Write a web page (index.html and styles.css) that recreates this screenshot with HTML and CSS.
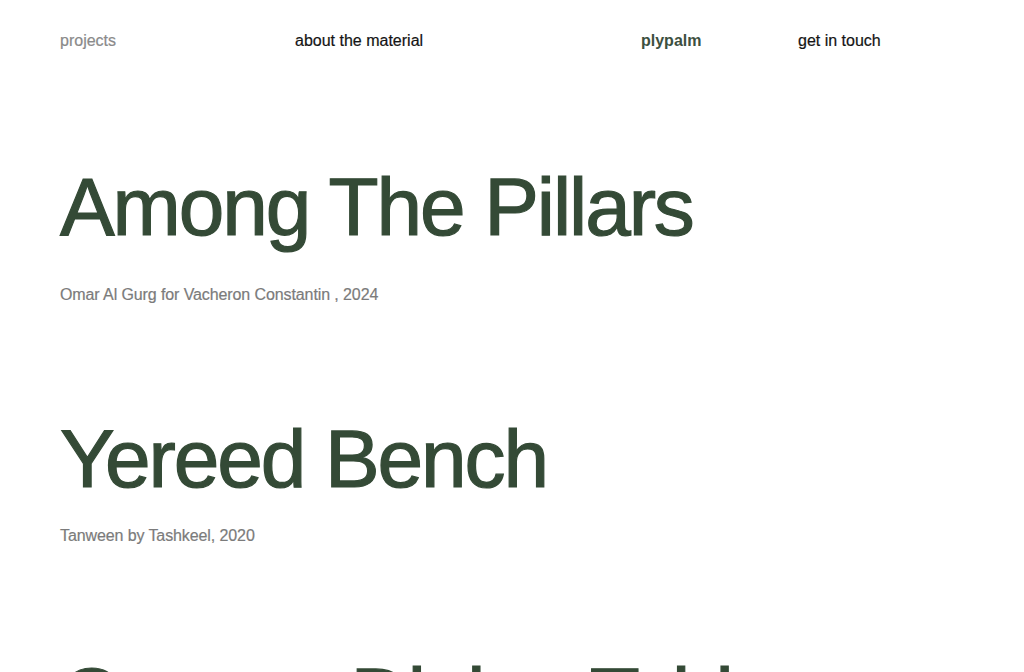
FILE: index.html
```html
<!DOCTYPE html>
<html lang="en">
<head>
<meta charset="utf-8">
<title>plypalm — projects</title>
<link rel="stylesheet" href="styles.css">
</head>
<body>
<nav class="nav">
  <a class="nav-link nav-link--muted" href="#">projects</a>
  <a class="nav-link" href="#">about the material</a>
  <a class="nav-link nav-link--brand" href="#">plypalm</a>
  <a class="nav-link" href="#">get in touch</a>
</nav>
<main class="projects">
  <article class="project project--first">
    <h2 class="project-title">Among The Pillars</h2>
    <p class="project-meta">Omar Al Gurg for Vacheron Constantin , 2024</p>
  </article>
  <article class="project">
    <h2 class="project-title">Yereed Bench</h2>
    <p class="project-meta">Tanween by Tashkeel, 2020</p>
  </article>
  <article class="project">
    <h2 class="project-title">Custom Dining Table</h2>
  </article>
</main>
</body>
</html>
```

FILE: styles.css
```css
html, body {
  margin: 0;
  padding: 0;
  background: #ffffff;
}

body {
  font-family: "Liberation Sans", Arial, sans-serif;
  color: #111111;
  overflow: hidden;
}

.nav {
  display: grid;
  grid-template-columns: 235px 346px 157px auto;
  padding: 32px 60px 0 60px;
  font-size: 16px;
  line-height: 18px;
}

.nav-link {
  color: #141414;
  text-decoration: none;
  -webkit-text-stroke: 0.2px currentColor;
}

.nav-link--muted {
  color: #8a8a8a;
}

.nav-link--brand {
  color: #3d503f;
  font-weight: 700;
  -webkit-text-stroke: 0;
}

.projects {
  padding: 116px 60px 0 60px;
}

.project {
  padding-bottom: 111px;
}

.project--first {
  padding-bottom: 114px;
}

.project-title {
  margin: 0;
  font-size: 82px;
  line-height: 82px;
  font-weight: 400;
  letter-spacing: -2.1px;
  color: #344a36;
  -webkit-text-stroke: 1.2px #344a36;
  white-space: nowrap;
}

.project-meta {
  margin: 26px 0 0 0;
  font-size: 16px;
  line-height: 19px;
  letter-spacing: -0.1px;
  color: #7b7b7b;
  -webkit-text-stroke: 0.2px currentColor;
}

.project--first .project-meta {
  margin-top: 37px;
}
```
